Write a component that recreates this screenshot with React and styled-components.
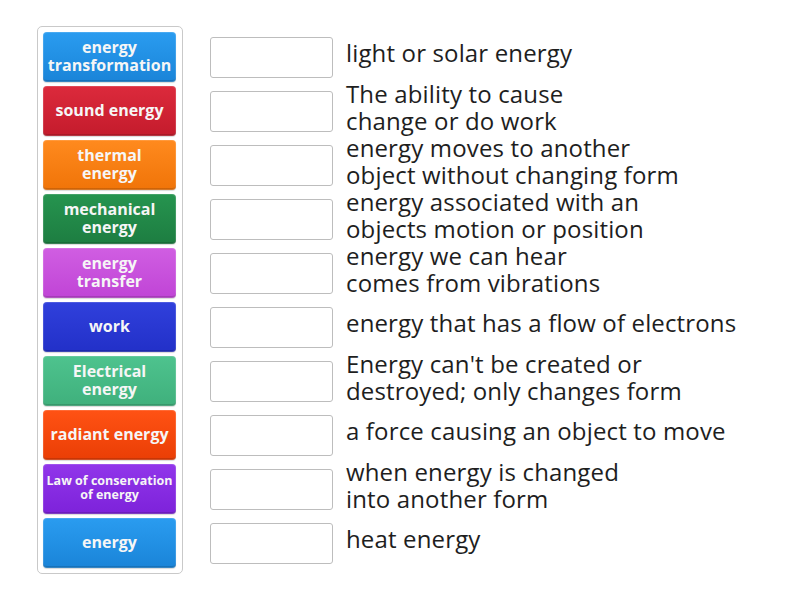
import React from "react";
import styled, { createGlobalStyle } from "styled-components";

const GlobalStyle = createGlobalStyle`
  body {
    margin: 0;
    background: #fff;
    font-family: "Open Sans", "Liberation Sans", sans-serif;
  }
`;

const Page = styled.div`
  display: flex;
  align-items: flex-start;
  gap: 27px;
  padding: 26px 0 0 37px;
`;

const Bank = styled.div`
  display: flex;
  flex-direction: column;
  gap: 4px;
  width: 133px;
  padding: 5px 6px 5px 5px;
  border: 1px solid #c9c9c9;
  border-radius: 5px;
`;

const Tile = styled.div`
  height: 50px;
  box-sizing: border-box;
  padding-bottom: 3px;
  display: flex;
  flex-direction: column;
  align-items: center;
  justify-content: center;
  text-align: center;
  white-space: nowrap;
  border-radius: 4px;
  background: linear-gradient(${(p) => p.$top}, ${(p) => p.$bottom});
  box-shadow: inset 0 0 0 1px rgba(255, 255, 255, 0.14),
    inset 0 -2px 0 rgba(0, 0, 0, 0.14), 0 1px 1px rgba(0, 0, 0, 0.15);
  color: #f6f6f6;
  font-weight: 700;
  font-size: ${(p) => (p.$small ? "12.5px" : "16px")};
  line-height: ${(p) => (p.$small ? "14px" : "18px")};
`;

const Targets = styled.div`
  display: flex;
  flex-direction: column;
  gap: 4px;
  padding-top: 6px;
`;

const Row = styled.div`
  height: 50px;
  display: flex;
  align-items: center;
  gap: 13px;
`;

const Slot = styled.div`
  width: 123px;
  height: 41px;
  box-sizing: border-box;
  border: 1px solid #bdbdbd;
  border-radius: 3px;
  background: #fff;
  flex-shrink: 0;
`;

const Desc = styled.div`
  font-size: 24px;
  line-height: 27px;
  letter-spacing: 0.15px;
  color: #1e1e1e;
  margin-top: -9px;
  white-space: nowrap;
`;

const tiles = [
  { lines: ["energy", "transformation"], top: "#2a9cf0", bottom: "#1a84d8" },
  { lines: ["sound energy"], top: "#dc2a3c", bottom: "#c41b2c" },
  { lines: ["thermal", "energy"], top: "#ff8a1e", bottom: "#f07408" },
  { lines: ["mechanical", "energy"], top: "#26944f", bottom: "#1d7d41" },
  { lines: ["energy", "transfer"], top: "#d05ee2", bottom: "#c044d6" },
  { lines: ["work"], top: "#3040dc", bottom: "#2230c8" },
  { lines: ["Electrical", "energy"], top: "#4ec38e", bottom: "#3fb07c" },
  { lines: ["radiant energy"], top: "#ff5214", bottom: "#ea3e05" },
  { lines: ["Law of conservation", "of energy"], top: "#9136ea", bottom: "#7d22da", small: true },
  { lines: ["energy"], top: "#2a9cf0", bottom: "#1a84d8" },
];

const descriptions = [
  ["light or solar energy"],
  ["The ability to cause", "change or do work"],
  ["energy moves to another", "object without changing form"],
  ["energy associated with an", "objects motion or position"],
  ["energy we can hear", "comes from vibrations"],
  ["energy that has a flow of electrons"],
  ["Energy can't be created or", "destroyed; only changes form"],
  ["a force causing an object to move"],
  ["when energy is changed", "into another form"],
  ["heat energy"],
];

export default function App() {
  return (
    <>
      <GlobalStyle />
      <Page>
        <Bank>
          {tiles.map((t, i) => (
            <Tile key={i} $top={t.top} $bottom={t.bottom} $small={t.small}>
              {t.lines.map((l) => (
                <span key={l}>{l}</span>
              ))}
            </Tile>
          ))}
        </Bank>
        <Targets>
          {descriptions.map((lines, i) => (
            <Row key={i}>
              <Slot />
              <Desc>
                {lines.map((l) => (
                  <div key={l}>{l}</div>
                ))}
              </Desc>
            </Row>
          ))}
        </Targets>
      </Page>
    </>
  );
}
